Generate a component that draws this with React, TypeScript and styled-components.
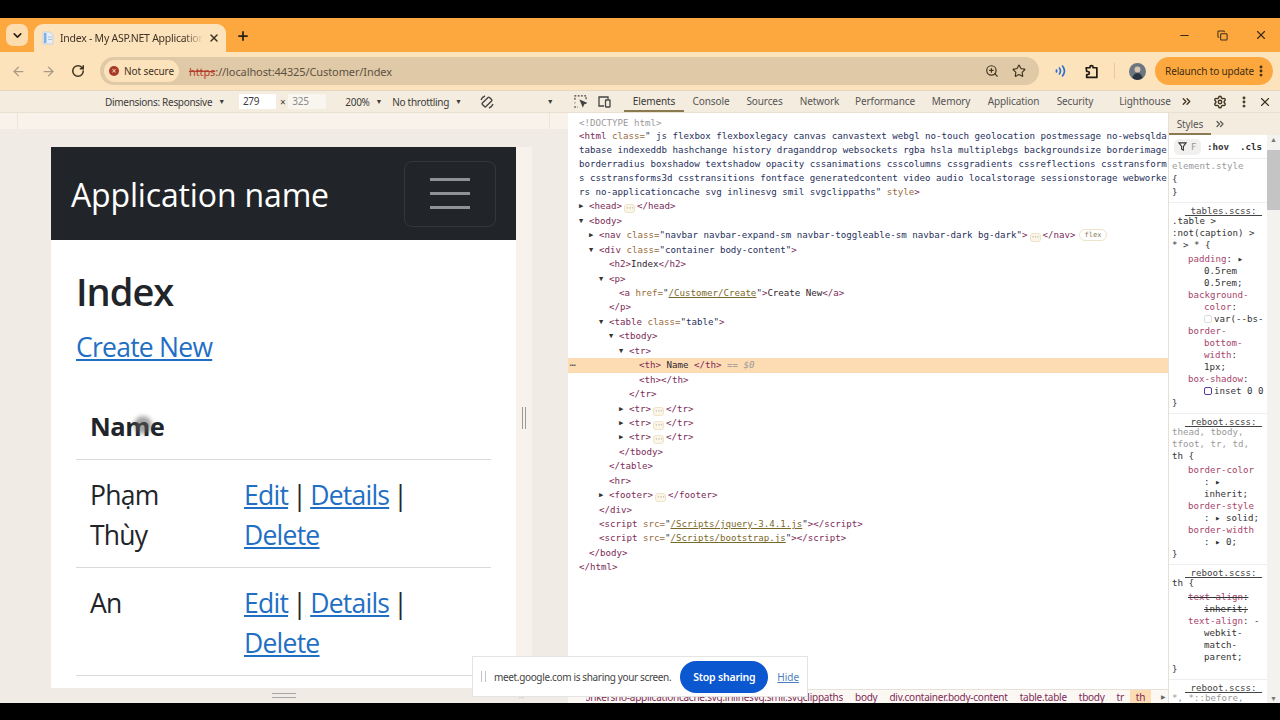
import React from "react";
import styled, { createGlobalStyle } from "styled-components";
import {
  ArrowLeft,
  ArrowRight,
  ChevronDown,
  ChevronsRight,
  Copy,
  EllipsisVertical,
  Minus,
  Plus,
  RotateCw,
  Settings,
  Star,
  X,
  ZoomIn,
} from "lucide-react";

const ui = `"Noto Sans", "Open Sans", sans-serif`;
const mono = `"DejaVu Sans Mono", "Liberation Mono", monospace`;

const Global = createGlobalStyle`
  html, body { margin: 0; padding: 0; background: #000; }
  * { box-sizing: border-box; }
`;

const Screen = styled.div`
  position: relative;
  width: 1280px;
  height: 720px;
  overflow: hidden;
  display: flex;
  flex-direction: column;
  background: #000;
  font-family: ${ui};
`;

const BlackBand = styled.div<{ $h: number }>`
  height: ${(p) => p.$h}px;
  flex: none;
  background: #000;
`;

/* ---- tab strip ---- */

const TabStrip = styled.div`
  height: 34px;
  flex: none;
  display: flex;
  align-items: flex-end;
  background: #fda83e;
  padding-left: 6px;
`;

const TabListButton = styled.div`
  width: 22px;
  height: 22px;
  margin-bottom: 6px;
  border-radius: 7px;
  background: #fddcb0;
  display: flex;
  align-items: center;
  justify-content: center;
  color: #2b2118;
`;

const Tab = styled.div`
  width: 192px;
  height: 28px;
  margin-left: 6px;
  padding: 0 6px 0 7px;
  border-radius: 9px 9px 0 0;
  background: #fde3bc;
  display: flex;
  align-items: center;
  color: #3d3225;
  font-size: 10.5px;
  letter-spacing: -0.25px;
`;

const TabTitle = styled.span`
  flex: 1;
  margin-left: 5px;
  white-space: nowrap;
  overflow: hidden;
  mask-image: linear-gradient(90deg, #000 84%, transparent 97%);
`;

const NewTab = styled.div`
  margin: 0 0 9px 10px;
  color: #2b2118;
  display: flex;
`;

const WindowControls = styled.div`
  margin-left: auto;
  height: 34px;
  display: flex;
  align-items: center;
  gap: 26px;
  padding-right: 12px;
  color: #3a2c1a;
  align-self: flex-start;
`;

/* ---- browser toolbar ---- */

const Toolbar = styled.div`
  height: 39px;
  flex: none;
  display: flex;
  align-items: center;
  background: #fde3bc;
  border-bottom: 1px solid #e3d7c4;
  padding: 0 7px 0 11px;
`;

const NavIcon = styled.div<{ $faded?: boolean; $gap?: number }>`
  display: flex;
  margin-left: ${(p) => p.$gap ?? 0}px;
  color: ${(p) => (p.$faded ? "#a89a86" : "#40341f")};
`;

const Omnibox = styled.div`
  width: 940px;
  height: 28px;
  margin-left: 15px;
  padding: 0 13px 0 4px;
  border-radius: 14px;
  background: #e0c9a6;
  display: flex;
  align-items: center;
  font-size: 11px;
  letter-spacing: -0.1px;
  color: #5d5142;
`;

const SecurityChip = styled.div`
  height: 22px;
  width: 75px;
  border-radius: 11px;
  background: #fde3bc;
  display: flex;
  align-items: center;
  justify-content: center;
  gap: 5px;
  color: #3d3225;
  font-size: 10px;
`;

const ErrorDot = styled.span`
  width: 10px;
  height: 10px;
  border-radius: 50%;
  background: #a8372a;
  color: #fde3bc;
  font-size: 8px;
  line-height: 10px;
  text-align: center;
`;

const Url = styled.span`
  margin-left: 10px;
  flex: 1;
`;

const StruckScheme = styled.span`
  color: #b3402f;
  text-decoration: line-through;
`;

const ToolbarDivider = styled.div`
  width: 1px;
  height: 16px;
  margin-left: 15px;
  background: #e8c99c;
`;

const Avatar = styled.div`
  width: 17px;
  height: 17px;
  margin-left: 14px;
  border-radius: 50%;
  background: #6b7680;
  display: flex;
  overflow: hidden;
`;

const RelaunchPill = styled.div`
  width: 118px;
  height: 28px;
  margin-left: 9px;
  border-radius: 14px;
  background: #fda83e;
  display: flex;
  align-items: center;
  padding-left: 10px;
  font-size: 10px;
  letter-spacing: -0.15px;
  color: #3d2c12;
  white-space: nowrap;
`;

/* ---- workspace ---- */

const Workspace = styled.div`
  flex: 1;
  min-height: 0;
  display: flex;
`;

const EmulationPane = styled.div`
  width: 568px;
  flex: none;
  display: flex;
  flex-direction: column;
  background: #f0ebe4;
`;

const DeviceBar = styled.div`
  height: 22px;
  flex: none;
  display: flex;
  align-items: center;
  padding-left: 105px;
  background: #f4ecdf;
  border-bottom: 1px solid #e9e0d2;
  font-size: 10px;
  letter-spacing: -0.3px;
  color: #3c3c3c;
  white-space: nowrap;
`;

const DeviceItem = styled.div<{ $gap: number }>`
  margin-left: ${(p) => p.$gap}px;
  display: flex;
  align-items: center;
  gap: 6px;
`;

const Caret = styled.span`
  font-size: 7px;
`;

const SizeBox = styled.div<{ $w: number; $muted?: boolean; $gap: number }>`
  width: ${(p) => p.$w}px;
  height: 15px;
  margin-left: ${(p) => p.$gap}px;
  padding-left: 4px;
  line-height: 15px;
  background: ${(p) => (p.$muted ? "#f9f5ef" : "#fff")};
  color: ${(p) => (p.$muted ? "#8c8c8c" : "#3c3c3c")};
`;

const Ruler = styled.div`
  height: 16px;
  flex: none;
  background: #f8f2ea;
  display: grid;
  grid-template-columns: 18px 532px 18px;
`;

const RulerCell = styled.div`
  border-right: 1px solid #eee5d8;
`;

const Stage = styled.div`
  flex: 1;
  min-height: 0;
  overflow: hidden;
  display: flex;
  padding: 18px 0 0 51px;
`;

const Viewport = styled.div`
  width: 465px;
  background: #fff;
  color: #212529;
  font-family: "Open Sans", "Noto Sans", sans-serif;
  display: flex;
  flex-direction: column;
`;

const SideHandle = styled.div`
  width: 16px;
  background: #f7f2ec;
  display: flex;
  justify-content: center;
  padding-top: 260px;
`;

const GripBar = styled.div`
  width: 4px;
  height: 22px;
  border-left: 1px solid #9a9a9a;
  border-right: 1px solid #9a9a9a;
`;

const BottomStrip = styled.div`
  height: 15px;
  flex: none;
  display: flex;
  align-items: center;
  padding-left: 272px;
  background: #f0ebe4;
  color: #b5b0a8;
`;

const BottomGrip = styled.div`
  width: 24px;
  height: 5px;
  margin-right: 221px;
  border-top: 1px solid #a5a5a5;
  border-bottom: 1px solid #a5a5a5;
`;

const NavBar = styled.div`
  height: 93px;
  flex: none;
  background: #212529;
  display: flex;
  align-items: center;
  justify-content: space-between;
  padding: 0 20px;
`;

const Brand = styled.div`
  margin-top: 2px;
  color: #fff;
  font-size: 32px;
  letter-spacing: -0.15px;
  white-space: nowrap;
`;

const Toggler = styled.div`
  width: 92px;
  height: 66px;
  border: 1px solid #34383c;
  border-radius: 8px;
  display: flex;
  flex-direction: column;
  align-items: center;
  justify-content: center;
  gap: 11px;
`;

const TogglerLine = styled.span`
  width: 40px;
  height: 3px;
  background: #8f9194;
`;

const Body = styled.div`
  padding: 0 25px;
`;

const PageTitle = styled.h2`
  margin: 27px 0 0;
  font-size: 38px;
  line-height: 48px;
  font-weight: 600;
  letter-spacing: -1px;
`;

const PageLink = styled.a`
  text-decoration: underline;
  color: #1f6fc4;
`;

const CreateLine = styled.p`
  margin: 12px 0 0;
  font-size: 26.5px;
  line-height: 40px;
  letter-spacing: -0.75px;
`;

const DataTable = styled.table`
  width: 100%;
  margin-top: 33px;
  border-collapse: collapse;
  font-size: 26.5px;
  line-height: 40px;
  letter-spacing: -0.75px;
`;

const HeadCell = styled.th`
  text-align: left;
  font-size: 25.5px;
  font-weight: 700;
  letter-spacing: -0.5px;
  padding: 0 14px 6px;
  height: 59px;
  border-bottom: 1px solid #d9d9d9;
`;

const Cell = styled.td<{ $w?: number }>`
  width: ${(p) => (p.$w ? `${p.$w}px` : "auto")};
  padding: 15px 14px 12px;
  vertical-align: top;
  border-bottom: 1px solid #d9d9d9;
`;

const ActionText = styled.div`
  word-spacing: -2px;
`;

const TouchDot = styled.div`
  position: absolute;
  left: 134px;
  top: 416px;
  width: 18px;
  height: 18px;
  border-radius: 50%;
  background: rgba(90, 90, 90, 0.55);
  filter: blur(2px);
`;

/* ---- devtools ---- */

const DevTools = styled.div`
  flex: 1;
  display: flex;
  flex-direction: column;
  min-width: 0;
  background: #fff;
`;

const DevTabs = styled.div`
  height: 22px;
  flex: none;
  display: flex;
  align-items: stretch;
  background: #f4ecdf;
  border-bottom: 1px solid #e9e0d2;
  font-size: 10px;
  letter-spacing: -0.1px;
  color: #4a4a4a;
  white-space: nowrap;
`;

const DevIcons = styled.div`
  width: 56px;
  display: flex;
  align-items: center;
  gap: 10px;
  padding-left: 6px;
  color: #444;
`;

const DevTab = styled.div<{ $active?: boolean; $w: number }>`
  width: ${(p) => p.$w}px;
  display: flex;
  align-items: center;
  justify-content: center;
  color: ${(p) => (p.$active ? "#3a3a3a" : "#555")};
  border-bottom: 2px solid ${(p) => (p.$active ? "#8a7a50" : "transparent")};
`;

const DevActions = styled.div`
  display: flex;
  align-items: center;
  margin-left: -7px;
`;

const DevBody = styled.div`
  flex: 1;
  min-height: 0;
  display: flex;
`;

const ElementsCol = styled.div`
  width: 600px;
  flex: none;
  display: flex;
  flex-direction: column;
`;

const Tree = styled.div`
  flex: 1;
  min-height: 0;
  padding-top: 3px;
  font-family: ${mono};
  font-size: 9.13px;
  line-height: 14.3px;
  color: #2f2530;
  overflow: hidden;
`;

const Row = styled.div<{ $indent?: number; $hl?: boolean; $tight?: boolean }>`
  position: relative;
  height: ${(p) => (p.$tight ? 13.8 : 14.44)}px;
  line-height: ${(p) => (p.$tight ? 13.8 : 14.3)}px;
  padding-left: ${(p) => 11 + (p.$indent ?? 0) * 10}px;
  white-space: pre;
  background: ${(p) => (p.$hl ? "#fddcb4" : "transparent")};
`;

const Arrow = styled.span`
  display: inline-block;
  width: 10px;
  margin-left: -10px;
  font-size: 7px;
  color: #333;
  vertical-align: 1px;
`;

const Tag = styled.span`
  color: #7d2a57;
`;

const Attr = styled.span`
  color: #9a6a3c;
`;

const Val = styled.span`
  color: #27305c;
`;

const Href = styled.span`
  color: #7a6a2a;
  text-decoration: underline;
`;

const Dim = styled.span`
  color: #9a9a9a;
`;

const Badge = styled.span`
  display: inline-block;
  width: 11px;
  height: 9px;
  margin: 0 2px;
  border: 1px solid #eee2c8;
  border-radius: 3px;
  background: #fbf6e8;
  color: #7a6a40;
  font-size: 6px;
  line-height: 6px;
  letter-spacing: -1px;
  text-align: center;
  vertical-align: -1px;
`;

const FlexBadge = styled.span`
  display: inline-block;
  margin-left: 3px;
  padding: 0 5px;
  border: 1px solid #eee2c8;
  border-radius: 6px;
  color: #8a7a50;
  font-size: 7px;
  line-height: 10px;
  vertical-align: 1px;
`;

const SelDots = styled.span`
  position: absolute;
  left: 2px;
  top: 0;
  color: #444;
`;

const Crumbs = styled.div`
  height: 14px;
  flex: none;
  display: flex;
  align-items: center;
  gap: 12px;
  padding-left: 18px;
  background: #fbf8f3;
  border-top: 1px solid #e6e0d6;
  font-size: 10px;
  letter-spacing: -0.25px;
  color: #7d2a57;
  white-space: nowrap;
  overflow: hidden;
`;

const CrumbPath = styled.span`
  width: 257px;
  flex: none;
  overflow: hidden;
  direction: rtl;
`;

const Crumb = styled.span<{ $on?: boolean }>`
  padding: 0 6px;
  margin: 0 -6px;
  background: ${(p) => (p.$on ? "#fddcb4" : "transparent")};
`;

const CrumbArrow = styled.span`
  margin-left: 4px;
  font-size: 6px;
  color: #666;
`;

const StylesCol = styled.div`
  flex: 1;
  min-width: 0;
  display: flex;
  flex-direction: column;
  border-left: 1px solid #e6e0d6;
`;

const StylesHead = styled.div`
  height: 22px;
  flex: none;
  display: flex;
  align-items: center;
  gap: 3px;
  background: #f4ecdf;
  font-size: 10px;
  letter-spacing: -0.1px;
  color: #555;
`;

const StylesTab = styled.div`
  width: 42px;
  height: 22px;
  padding-top: 1px;
  display: flex;
  align-items: center;
  justify-content: center;
  border-bottom: 2px solid #8a7a50;
`;

const StylesMain = styled.div`
  flex: 1;
  min-height: 0;
  display: flex;
`;

const StylesBody = styled.div`
  width: 98px;
  flex: none;
  overflow: hidden;
  font-family: ${mono};
  font-size: 9.13px;
  line-height: 12px;
  color: #333;
`;

const FilterRow = styled.div`
  height: 24px;
  display: flex;
  align-items: center;
  padding-left: 5px;
  font-weight: 700;
  white-space: nowrap;
  border-bottom: 1px solid #eee;
`;

const FilterBox = styled.div`
  width: 27px;
  height: 16px;
  border-radius: 5px;
  background: #f1f0ee;
  display: flex;
  align-items: center;
  padding-left: 4px;
  gap: 4px;
  color: #999;
  font-weight: 400;
  margin-right: 6px;
`;

const Rule = styled.div<{ $pt: number; $pb: number }>`
  padding: ${(p) => p.$pt}px 0 ${(p) => p.$pb}px 3px;
  border-bottom: 1px solid #eee;
`;

const Line = styled.div<{ $lv?: number; $h?: number }>`
  height: ${(p) => p.$h ?? 12}px;
  padding-left: ${(p) => (p.$lv ?? 0) * 16}px;
  white-space: pre;
`;

const Source = styled.div`
  height: 10px;
  padding-left: 13px;
  text-decoration: underline;
  color: #444;
  white-space: pre;
`;

const Prop = styled.span`
  color: #a8456b;
`;

const Struck = styled.span`
  text-decoration: line-through;
`;

const Swatch = styled.span<{ $c: string }>`
  display: inline-block;
  width: 8px;
  height: 8px;
  margin-right: 2px;
  border: 1px solid ${(p) => p.$c};
  border-radius: 2px;
  vertical-align: -1px;
`;

const Scrollbar = styled.div`
  flex: 1;
  background: #f4f2ef;
  display: flex;
  flex-direction: column;
  align-items: center;
  font-size: 7px;
  color: #777;
`;

const ScrollThumb = styled.div`
  width: 100%;
  height: 60px;
  margin-top: 6px;
  background: #c4c4c4;
`;

const ScrollDown = styled.div`
  margin-top: auto;
`;

/* ---- sharing bar ---- */

const ShareBar = styled.div`
  position: absolute;
  left: 472px;
  top: 656px;
  width: 336px;
  height: 41px;
  background: #fff;
  border: 1px solid #e4e4e4;
  display: flex;
  align-items: center;
  padding-left: 8px;
  font-size: 10px;
  color: #444;
  white-space: nowrap;
`;

const ShareGrip = styled.div`
  width: 5px;
  height: 11px;
  border-left: 1px solid #c4c4c4;
  border-right: 1px solid #c4c4c4;
`;

const ShareText = styled.span`
  margin-left: 8px;
  letter-spacing: -0.35px;
`;

const StopButton = styled.div`
  width: 88px;
  height: 32px;
  margin-left: 9px;
  border-radius: 16px;
  background: #0b57d0;
  color: #fff;
  font-size: 10.5px;
  font-weight: 600;
  letter-spacing: -0.2px;
  display: flex;
  align-items: center;
  justify-content: center;
`;

const HideLink = styled.span`
  margin-left: 9px;
  color: #4a7fc1;
  text-decoration: underline;
`;

const people = ["Phạm\nThùy", "An"];

function ActionLinks() {
  return (
    <ActionText>
      <PageLink>Edit</PageLink> | <PageLink>Details</PageLink> |<br />
      <PageLink>Delete</PageLink>
    </ActionText>
  );
}

function Collapsed({ indent }: { indent: number }) {
  return (
    <Row $indent={indent}>
      <Arrow>▶</Arrow>
      <Tag>&lt;tr&gt;</Tag><Badge>···</Badge><Tag>&lt;/tr&gt;</Tag>
    </Row>
  );
}

function ElementsTree() {
  return (
    <Tree>
      <Row><Dim>&lt;!DOCTYPE html&gt;</Dim></Row>
      <Row $tight><Tag>&lt;html</Tag> <Attr>class=</Attr><Val>" js flexbox flexboxlegacy canvas canvastext webgl no-touch geolocation postmessage no-websqlda</Val></Row>
      <Row $tight><Val>tabase indexeddb hashchange history draganddrop websockets rgba hsla multiplebgs backgroundsize borderimage</Val></Row>
      <Row $tight><Val>borderradius boxshadow textshadow opacity cssanimations csscolumns cssgradients cssreflections csstransform</Val></Row>
      <Row $tight><Val>s csstransforms3d csstransitions fontface generatedcontent video audio localstorage sessionstorage webworke</Val></Row>
      <Row $tight><Val>rs no-applicationcache svg inlinesvg smil svgclippaths"</Val> <Attr>style</Attr><Tag>&gt;</Tag></Row>
      <Row $indent={1}><Arrow>▶</Arrow><Tag>&lt;head&gt;</Tag><Badge>···</Badge><Tag>&lt;/head&gt;</Tag></Row>
      <Row $indent={1}><Arrow>▼</Arrow><Tag>&lt;body&gt;</Tag></Row>
      <Row $indent={2}><Arrow>▶</Arrow><Tag>&lt;nav</Tag> <Attr>class=</Attr><Val>"navbar navbar-expand-sm navbar-toggleable-sm navbar-dark bg-dark"</Val><Tag>&gt;</Tag><Badge>···</Badge><Tag>&lt;/nav&gt;</Tag><FlexBadge>flex</FlexBadge></Row>
      <Row $indent={2}><Arrow>▼</Arrow><Tag>&lt;div</Tag> <Attr>class=</Attr><Val>"container body-content"</Val><Tag>&gt;</Tag></Row>
      <Row $indent={3}><Tag>&lt;h2&gt;</Tag>Index<Tag>&lt;/h2&gt;</Tag></Row>
      <Row $indent={3}><Arrow>▼</Arrow><Tag>&lt;p&gt;</Tag></Row>
      <Row $indent={4}><Tag>&lt;a</Tag> <Attr>href=</Attr><Val>"</Val><Href>/Customer/Create</Href><Val>"</Val><Tag>&gt;</Tag>Create New<Tag>&lt;/a&gt;</Tag></Row>
      <Row $indent={3}><Tag>&lt;/p&gt;</Tag></Row>
      <Row $indent={3}><Arrow>▼</Arrow><Tag>&lt;table</Tag> <Attr>class=</Attr><Val>"table"</Val><Tag>&gt;</Tag></Row>
      <Row $indent={4}><Arrow>▼</Arrow><Tag>&lt;tbody&gt;</Tag></Row>
      <Row $indent={5}><Arrow>▼</Arrow><Tag>&lt;tr&gt;</Tag></Row>
      <Row $indent={6} $hl><SelDots>⋯</SelDots><Tag>&lt;th&gt;</Tag> Name <Tag>&lt;/th&gt;</Tag> <Dim>== <i>$0</i></Dim></Row>
      <Row $indent={6}><Tag>&lt;th&gt;&lt;/th&gt;</Tag></Row>
      <Row $indent={5}><Tag>&lt;/tr&gt;</Tag></Row>
      <Collapsed indent={5} />
      <Collapsed indent={5} />
      <Collapsed indent={5} />
      <Row $indent={4}><Tag>&lt;/tbody&gt;</Tag></Row>
      <Row $indent={3}><Tag>&lt;/table&gt;</Tag></Row>
      <Row $indent={3}><Tag>&lt;hr&gt;</Tag></Row>
      <Row $indent={3}><Arrow>▶</Arrow><Tag>&lt;footer&gt;</Tag><Badge>···</Badge><Tag>&lt;/footer&gt;</Tag></Row>
      <Row $indent={2}><Tag>&lt;/div&gt;</Tag></Row>
      <Row $indent={2}><Tag>&lt;script</Tag> <Attr>src=</Attr><Val>"</Val><Href>/Scripts/jquery-3.4.1.js</Href><Val>"</Val><Tag>&gt;&lt;/script&gt;</Tag></Row>
      <Row $indent={2}><Tag>&lt;script</Tag> <Attr>src=</Attr><Val>"</Val><Href>/Scripts/bootstrap.js</Href><Val>"</Val><Tag>&gt;&lt;/script&gt;</Tag></Row>
      <Row $indent={1}><Tag>&lt;/body&gt;</Tag></Row>
      <Row><Tag>&lt;/html&gt;</Tag></Row>
    </Tree>
  );
}

function StylesPanel() {
  return (
    <StylesBody>
      <FilterRow>
        <FilterBox>
          <svg width="9" height="9" viewBox="0 0 10 10"><path d="M1 1h8L6 5v4L4 8V5z" fill="none" stroke="#333" strokeWidth="1.2" /></svg>
          F
        </FilterBox>
        :hov&nbsp;&nbsp;.cls
      </FilterRow>
      <Rule $pt={1} $pb={3}>
        <Line $h={13}><Dim>element.style</Dim></Line>
        <Line $h={13}>{"{"}</Line>
        <Line $h={13}>{"}"}</Line>
      </Rule>
      <Rule $pt={2} $pb={4}>
        <Source>_tables.scss:_</Source>
        <Line>.table &gt;</Line>
        <Line>:not(caption) &gt;</Line>
        <Line $h={14}>* &gt; * {"{"}</Line>
        <Line $lv={1}><Prop>padding</Prop>: ▸</Line>
        <Line $lv={2}>0.5rem</Line>
        <Line $lv={2}>0.5rem;</Line>
        <Line $lv={1}><Prop>background-</Prop></Line>
        <Line $lv={2}><Prop>color</Prop>:</Line>
        <Line $lv={2}><Swatch $c="#ddd" />var(--bs-</Line>
        <Line $lv={1}><Prop>border-</Prop></Line>
        <Line $lv={2}><Prop>bottom-</Prop></Line>
        <Line $lv={2}><Prop>width</Prop>:</Line>
        <Line $lv={2}>1px;</Line>
        <Line $lv={1}><Prop>box-shadow</Prop>:</Line>
        <Line $lv={2}><Swatch $c="#5a3aa0" />inset 0 0</Line>
        <Line>{"}"}</Line>
      </Rule>
      <Rule $pt={2} $pb={4}>
        <Source>_reboot.scss:_</Source>
        <Line><Dim>thead, tbody,</Dim></Line>
        <Line><Dim>tfoot, tr, td,</Dim></Line>
        <Line $h={14}>th {"{"}</Line>
        <Line $lv={1}><Prop>border-color</Prop></Line>
        <Line $lv={2}>: ▸</Line>
        <Line $lv={2}>inherit;</Line>
        <Line $lv={1}><Prop>border-style</Prop></Line>
        <Line $lv={2}>: ▸ solid;</Line>
        <Line $lv={1}><Prop>border-width</Prop></Line>
        <Line $lv={2}>: ▸ 0;</Line>
        <Line>{"}"}</Line>
      </Rule>
      <Rule $pt={2} $pb={4}>
        <Source>_reboot.scss:_</Source>
        <Line $h={14}>th {"{"}</Line>
        <Line $lv={1}><Struck><Prop>text-align</Prop>:</Struck></Line>
        <Line $lv={2}><Struck>inherit;</Struck></Line>
        <Line $lv={1}><Prop>text-align</Prop>: -</Line>
        <Line $lv={2}>webkit-</Line>
        <Line $lv={2}>match-</Line>
        <Line $lv={2}>parent;</Line>
        <Line>{"}"}</Line>
      </Rule>
      <Rule $pt={2} $pb={0}>
        <Source>_reboot.scss:_</Source>
        <Line><Dim>*, *::before,</Dim></Line>
      </Rule>
    </StylesBody>
  );
}

export default function App() {
  return (
    <Screen>
      <Global />
      <BlackBand $h={18} />
      <TabStrip>
        <TabListButton><ChevronDown size={13} strokeWidth={3} /></TabListButton>
        <Tab>
          <svg width="14" height="14" viewBox="0 0 14 14">
            <path d="M2 1h7l3 3v9H2z" fill="#e9eef5" stroke="#c4d0de" />
            <path d="M3 2h2.500v10H3z" fill="#7db0e4" />
            <path d="M7 6h4M7 8.500h4" stroke="#a9c4e2" />
          </svg>
          <TabTitle>Index - My ASP.NET Application</TabTitle>
          <X size={12} strokeWidth={3} />
        </Tab>
        <NewTab><Plus size={14} strokeWidth={3} /></NewTab>
        <WindowControls>
          <Minus size={13} />
          <Copy size={11} strokeWidth={2.2} />
          <X size={14} />
        </WindowControls>
      </TabStrip>
      <Toolbar>
        <NavIcon $faded><ArrowLeft size={15} /></NavIcon>
        <NavIcon $faded $gap={15}><ArrowRight size={15} /></NavIcon>
        <NavIcon $gap={15}><RotateCw size={14} strokeWidth={2.6} /></NavIcon>
        <Omnibox>
          <SecurityChip><ErrorDot>×</ErrorDot>Not secure</SecurityChip>
          <Url><StruckScheme>https</StruckScheme>://localhost:44325/Customer/Index</Url>
          <NavIcon><ZoomIn size={14} /></NavIcon>
          <NavIcon $gap={13}><Star size={14} /></NavIcon>
        </Omnibox>
        <NavIcon $gap={15}>
          <svg width="14" height="14" viewBox="0 0 14 14" fill="none" stroke="#2a6fd0" strokeWidth="1.6">
            <path d="M2 5.500q1.400 1.500 0 3M5 3.500q3 3.500 0 7M8.200 1.500q4.600 5.500 0 11" />
          </svg>
        </NavIcon>
        <NavIcon $gap={16}>
          <svg width="15" height="15" viewBox="0 0 14 14" fill="none" stroke="#1f1a12" strokeWidth="1.6" strokeLinejoin="round">
            <path d="M2 3.500h3.500V3a1.500 1.500 0 0 1 3 0v.5H12v9H2.500v-2.500H3.500a1.500 1.500 0 0 0 0-3H2.500z" />
          </svg>
        </NavIcon>
        <ToolbarDivider />
        <Avatar>
          <svg width="17" height="17" viewBox="0 0 17 17">
            <circle cx="8.500" cy="6.500" r="3" fill="#d9c4b4" />
            <path d="M3 17q1-7 5.500-7t5.500 7z" fill="#2c3440" />
          </svg>
        </Avatar>
        <RelaunchPill>
          Relaunch to update
          <EllipsisVertical size={14} strokeWidth={3} />
        </RelaunchPill>
      </Toolbar>
      <Workspace>
        <EmulationPane>
          <DeviceBar>
            <DeviceItem $gap={0}>Dimensions: Responsive <Caret>▼</Caret></DeviceItem>
            <SizeBox $w={37} $gap={14}>279</SizeBox>
            <DeviceItem $gap={4}>×</DeviceItem>
            <SizeBox $w={38} $muted $gap={3}>325</SizeBox>
            <DeviceItem $gap={19}>200% <Caret>▼</Caret></DeviceItem>
            <DeviceItem $gap={10}>No throttling <Caret>▼</Caret></DeviceItem>
            <DeviceItem $gap={17}>
              <svg width="16" height="16" viewBox="0 0 16 16" fill="none" stroke="#444" strokeWidth="1.4">
                <rect x="5.500" y="3" width="5" height="10" rx="1" transform="rotate(45 8 8)" />
                <path d="M2 6A6.500 6.500 0 0 1 6 2M14 10A6.500 6.500 0 0 1 10 14" />
              </svg>
            </DeviceItem>
            <DeviceItem $gap={52}><Caret>▼</Caret></DeviceItem>
          </DeviceBar>
          <Ruler><RulerCell /><RulerCell /></Ruler>
          <Stage>
            <Viewport>
              <NavBar>
                <Brand>Application name</Brand>
                <Toggler>
                  <TogglerLine />
                  <TogglerLine />
                  <TogglerLine />
                </Toggler>
              </NavBar>
              <Body>
                <PageTitle>Index</PageTitle>
                <CreateLine><PageLink>Create New</PageLink></CreateLine>
                <DataTable>
                  <tbody>
                    <tr><HeadCell>Name</HeadCell><HeadCell /></tr>
                    {people.map((name) => (
                      <tr key={name}>
                        <Cell $w={154}>
                          {name.split("\n").map((part) => (
                            <div key={part}>{part}</div>
                          ))}
                        </Cell>
                        <Cell><ActionLinks /></Cell>
                      </tr>
                    ))}
                  </tbody>
                </DataTable>
              </Body>
            </Viewport>
            <SideHandle><GripBar /></SideHandle>
          </Stage>
          <BottomStrip>
            <BottomGrip />
            <ChevronsRight size={10} />
          </BottomStrip>
        </EmulationPane>
        <DevTools>
          <DevTabs>
            <DevIcons>
              <svg width="13" height="13" viewBox="0 0 14 14" fill="none" stroke="#444" strokeWidth="1.3">
                <path d="M1 5V1h12v4M1 8v1M1 12v1h3" strokeDasharray="2 1.500" />
                <path d="M7 6l6 2.500-2.500 1 -1 2.500z" fill="#444" />
              </svg>
              <svg width="14" height="13" viewBox="0 0 14 13" fill="none" stroke="#444" strokeWidth="1.3">
                <path d="M7 11H2V2h9v2" />
                <rect x="8.500" y="5" width="4.500" height="7" rx="0.5" />
              </svg>
            </DevIcons>
            <DevTab $active $w={60}>Elements</DevTab>
            <DevTab $w={54}>Console</DevTab>
            <DevTab $w={53}>Sources</DevTab>
            <DevTab $w={57}>Network</DevTab>
            <DevTab $w={74}>Performance</DevTab>
            <DevTab $w={58}>Memory</DevTab>
            <DevTab $w={67}>Application</DevTab>
            <DevTab $w={56}>Security</DevTab>
            <DevTab $w={84}>Lighthouse</DevTab>
            <DevActions>
              <NavIcon><ChevronsRight size={13} strokeWidth={2.4} /></NavIcon>
              <NavIcon $gap={20}><Settings size={14} strokeWidth={2.4} /></NavIcon>
              <NavIcon $gap={10}><EllipsisVertical size={14} strokeWidth={3} /></NavIcon>
              <NavIcon $gap={7}><X size={14} strokeWidth={2} /></NavIcon>
            </DevActions>
          </DevTabs>
          <DevBody>
            <ElementsCol>
              <ElementsTree />
              <Crumbs>
                <CrumbPath>‎/onkersno-applicationcache.svg.inlinesvg.smil.svgclippaths</CrumbPath>
                <Crumb>body</Crumb>
                <Crumb>div.container.body-content</Crumb>
                <Crumb>table.table</Crumb>
                <Crumb>tbody</Crumb>
                <Crumb>tr</Crumb>
                <Crumb $on>th</Crumb>
                <CrumbArrow>▶</CrumbArrow>
              </Crumbs>
            </ElementsCol>
            <StylesCol>
              <StylesHead>
                <StylesTab>Styles</StylesTab>
                <ChevronsRight size={12} strokeWidth={2.4} />
              </StylesHead>
              <StylesMain>
                <StylesPanel />
                <Scrollbar>
                  ▲
                  <ScrollThumb />
                  <ScrollDown>▼</ScrollDown>
                </Scrollbar>
              </StylesMain>
            </StylesCol>
          </DevBody>
        </DevTools>
      </Workspace>
      <BlackBand $h={17} />
      <TouchDot />
      <ShareBar>
        <ShareGrip />
        <ShareText>meet.google.com is sharing your screen.</ShareText>
        <StopButton>Stop sharing</StopButton>
        <HideLink>Hide</HideLink>
      </ShareBar>
    </Screen>
  );
}
